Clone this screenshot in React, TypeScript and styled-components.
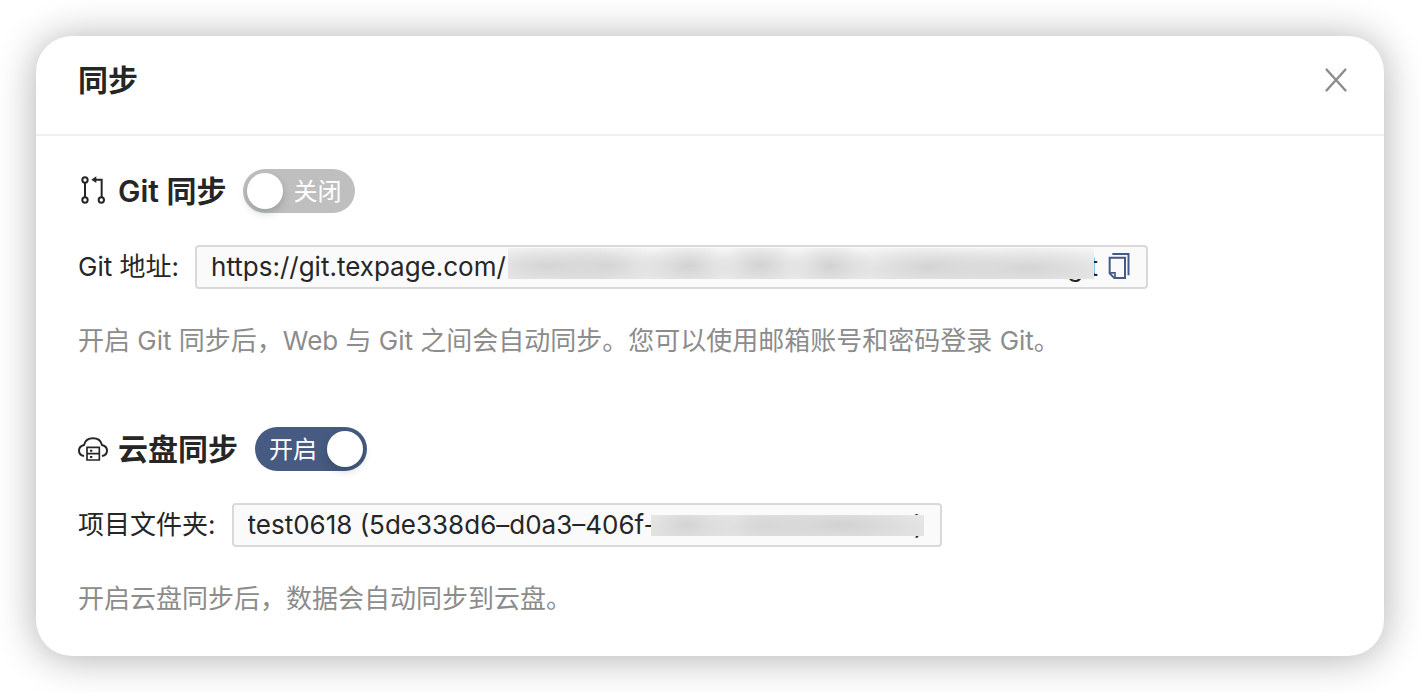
import React, { useState } from 'react';
import styled, { createGlobalStyle, css } from 'styled-components';

const GlobalStyle = createGlobalStyle`
  *, *::before, *::after { box-sizing: border-box; }
  body {
    margin: 0;
    background: #fff;
    color: #262626;
    font-family: Inter, "Noto Sans CJK SC", sans-serif;
    font-size: 26px;
    line-height: 40px;
  }
`;

const Page = styled.main`
  padding: 36px;
`;

const Dialog = styled.section`
  background: #fff;
  border-radius: 36px;
  box-shadow: 0 2px 40px rgba(0, 0, 0, 0.32);
`;

const Header = styled.header`
  display: flex;
  align-items: center;
  justify-content: space-between;
  height: 100px;
  padding: 0 36px 10px 42px;
  border-bottom: 2px solid #f0f0f0;
`;

const Title = styled.h1`
  margin: 0;
  font-size: 30px;
  font-weight: 600;
`;

const IconButton = styled.button`
  display: flex;
  flex: none;
  padding: 0;
  border: 0;
  background: none;
  color: #8c8c8c;
  cursor: pointer;
`;

const CopyButton = styled(IconButton)`
  margin-left: 10px;
  padding-bottom: 3px;
  color: #465a86;
`;

const Body = styled.div`
  display: flex;
  flex-direction: column;
  gap: 66px;
  padding: 33px 42px 37px;
`;

const Group = styled.section`
  display: flex;
  flex-direction: column;
  gap: 32px;
`;

const HeadingRow = styled.div`
  display: flex;
  align-items: center;
  height: 44px;
`;

const Heading = styled.h2`
  margin: 0 17px 0 10px;
  font-size: 30px;
  font-weight: 600;
`;

const Toggle = styled.button<{ $on: boolean }>`
  display: flex;
  align-items: center;
  justify-content: space-between;
  flex-direction: ${(p) => (p.$on ? 'row-reverse' : 'row')};
  width: 112px;
  height: 44px;
  padding: ${(p) => (p.$on ? '0 4px 0 14px' : '0 14px 0 4px')};
  border: 0;
  border-radius: 22px;
  background: ${(p) => (p.$on ? '#465a82' : '#bfbfbf')};
  color: #fff;
  font-family: inherit;
  font-size: 24px;
  cursor: pointer;
`;

const Knob = styled.span`
  width: 36px;
  height: 36px;
  border-radius: 50%;
  background: #fff;
  box-shadow: 0 4px 8px rgba(0, 35, 11, 0.2);
`;

const ToggleText = styled.span`
  padding-bottom: 4px;
`;

const FieldRow = styled.div`
  display: flex;
  align-items: center;
  gap: 16px;
`;

const Label = styled.label`
  flex: none;
`;

const Field = styled.div<{ $width: number }>`
  position: relative;
  display: flex;
  align-items: center;
  flex: 0 1 ${(p) => p.$width}px;
  min-width: 0;
  height: 44px;
  padding: 0 16px 0 14px;
  border: 2px solid #d9d9d9;
  border-radius: 4px;
  background: #fafafa;
`;

const Value = styled.input`
  flex: 1;
  min-width: 0;
  height: 40px;
  padding: 0;
  border: 0;
  outline: 0;
  background: none;
  color: inherit;
  font: inherit;
`;

const urlMask = css`
  top: 1px;
  left: 311px;
  right: 52px;
  height: 31px;
  background:
    radial-gradient(ellipse 84px 24px at 40px 18px, #d4d4d4, transparent),
    radial-gradient(ellipse 64px 24px at 100px 18px, #d6d6d6, transparent),
    radial-gradient(ellipse 48px 24px at 180px 18px, #d2d2d2, transparent),
    radial-gradient(ellipse 46px 24px at 252px 17px, #d2d2d2, transparent),
    radial-gradient(ellipse 44px 24px at 322px 18px, #d2d2d2, transparent),
    radial-gradient(ellipse 90px 24px at 420px 19px, #d4d4d4, transparent),
    radial-gradient(ellipse 110px 24px at 520px 20px, #d4d4d4, transparent),
    linear-gradient(#f6f6f6, #ebebeb);
`;

const folderMask = css`
  top: 10px;
  left: 417px;
  right: 16px;
  height: 21px;
  background:
    radial-gradient(ellipse 50px 24px at 36px 10px, #d4d4d4, transparent),
    radial-gradient(ellipse 60px 24px at 114px 10px, #d6d6d6, transparent),
    radial-gradient(ellipse 110px 24px at 190px 10px, #d2d2d2, transparent),
    linear-gradient(#ececec, #e6e6e6);
`;

const Mask = styled.span<{ $kind: 'url' | 'folder' }>`
  position: absolute;
  ${(p) => (p.$kind === 'url' ? urlMask : folderMask)}
`;

const Hint = styled.p`
  margin: 0;
  color: #8c8c8c;
`;

const CloseIcon = () => (
  <svg width="24" height="24" viewBox="0 0 24 24" fill="none" stroke="currentColor" strokeWidth="2.4" aria-hidden="true">
    <path d="M2 1h1l19 22h1M22 1h-1L2 23H1" strokeWidth="0.500" />
    <path d="M2 1 22 23M22 1 2 23" />
  </svg>
);

const GitIcon = () => (
  <svg width="30" height="34" viewBox="54 72 90 102" fill="none" stroke="currentColor" strokeWidth="6" aria-hidden="true">
    <circle cx="75" cy="90" r="8" />
    <circle cx="75" cy="150" r="8" />
    <circle cx="124" cy="150" r="8" />
    <path d="M75 98v44M106 89h19v53" />
    <path d="M94 89 109 79v20z" fill="currentColor" stroke="none" />
  </svg>
);

const CloudIcon = () => (
  <svg width="30" height="28" viewBox="54 72 90 84" fill="none" stroke="currentColor" strokeWidth="6" aria-hidden="true">
    <path d="M72 135C62 133 57 127 57 119c0-9 6-15 15-17 3-12 13-20 27-20s24 8 27 20c9 2 15 8 15 17 0 8-5 14-15 16" />
    <path d="M81 109h37v38H81zM81 128h37" strokeWidth="5" />
    <path d="M90 119h7M90 138h7" strokeWidth="6" />
  </svg>
);

const CopyIcon = () => (
  <svg width="22" height="27" viewBox="870 51 66 81" fill="none" stroke="currentColor" strokeWidth="6" aria-hidden="true">
    <path d="M883 57h48.500V121" />
    <path d="M875 68.500h46V129H889l-14-14z" />
    <path d="M875 113.500h16V129" strokeWidth="5" />
  </svg>
);

function Switch({ initial, label }: { initial: boolean; label: string }) {
  const [on, setOn] = useState(initial);
  return (
    <Toggle type="button" role="switch" aria-checked={on} aria-label={label} $on={on} onClick={() => setOn(!on)}>
      <Knob />
      <ToggleText>{on ? '开启' : '关闭'}</ToggleText>
    </Toggle>
  );
}

export default function App() {
  return (
    <Page>
      <GlobalStyle />
      <Dialog role="dialog" aria-labelledby="sync-title">
        <Header>
          <Title id="sync-title">同步</Title>
          <IconButton type="button" aria-label="关闭">
            <CloseIcon />
          </IconButton>
        </Header>
        <Body>
          <Group>
            <HeadingRow>
              <GitIcon />
              <Heading>Git 同步</Heading>
              <Switch initial={false} label="Git 同步" />
            </HeadingRow>
            <FieldRow>
              <Label htmlFor="git-url">Git 地址:</Label>
              <Field $width={953}>
                <Value id="git-url" readOnly value="https://git.texpage.com/" />
                <span>git</span>
                <Mask $kind="url" />
                <CopyButton type="button" aria-label="复制">
                  <CopyIcon />
                </CopyButton>
              </Field>
            </FieldRow>
            <Hint>开启 Git 同步后，Web 与 Git 之间会自动同步。您可以使用邮箱账号和密码登录 Git。</Hint>
          </Group>
          <Group>
            <HeadingRow>
              <CloudIcon />
              <Heading>云盘同步</Heading>
              <Switch initial label="云盘同步" />
            </HeadingRow>
            <FieldRow>
              <Label htmlFor="folder">项目文件夹:</Label>
              <Field $width={710}>
                <Value id="folder" readOnly value="test0618 (5de338d6–d0a3–406f-" />
                <span>)</span>
                <Mask $kind="folder" />
              </Field>
            </FieldRow>
            <Hint>开启云盘同步后，数据会自动同步到云盘。</Hint>
          </Group>
        </Body>
      </Dialog>
    </Page>
  );
}
